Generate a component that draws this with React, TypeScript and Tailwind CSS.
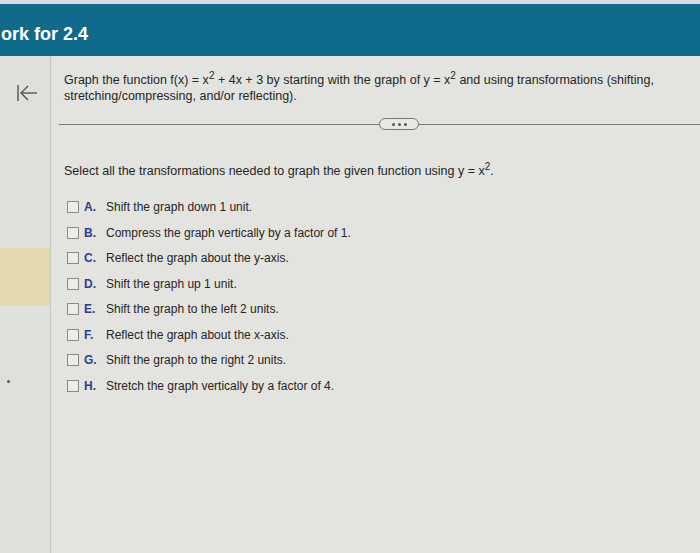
import React from "react";

const options = [
  ["A.", "Shift the graph down 1 unit."],
  ["B.", "Compress the graph vertically by a factor of 1."],
  ["C.", "Reflect the graph about the y-axis."],
  ["D.", "Shift the graph up 1 unit."],
  ["E.", "Shift the graph to the left 2 units."],
  ["F.", "Reflect the graph about the x-axis."],
  ["G.", "Shift the graph to the right 2 units."],
  ["H.", "Stretch the graph vertically by a factor of 4."],
];

export default function App() {
  return (
    <div
      className="w-[700px] h-[553px] overflow-hidden bg-[#e3e3df] flex flex-col text-[#262626]"
      style={{ fontFamily: '"Liberation Sans", Arial, sans-serif' }}
    >
      <div className="h-[4px] bg-[#d9dcdc]" />
      <div className="h-[52px] bg-[#106a8c] flex items-center pt-[8px]">
        <span className="text-white font-bold text-[18px] pl-[1px]">ork for 2.4</span>
      </div>
      <div className="flex flex-1">
        <div className="w-[51px] border-r border-[#c9c9c5] bg-[#dfdfdb] flex flex-col">
          <div className="h-[46px] flex items-end justify-center pl-[4px]">
            <svg width="22" height="18" viewBox="0 0 22 18" fill="none" stroke="#555" strokeWidth="1.4">
              <line x1="2" y1="1" x2="2" y2="17" />
              <line x1="5" y1="9" x2="21" y2="9" />
              <polyline points="12,2 5,9 12,16" />
            </svg>
          </div>
          <div className="h-[146px]" />
          <div className="h-[58px] bg-[#e2d9ae]" />
          <div className="h-[74px]" />
          <div className="ml-[7px] w-[3px] h-[3px] rounded-full bg-[#555]" />
        </div>
        <div className="flex-1 flex flex-col">
          <div className="pl-[13px] pt-[16px] pr-2 text-[12.5px] leading-[16px]">
            <p>
              Graph the function f(x) = x<sup className="text-[10px]">2</sup> + 4x + 3 by starting with the graph of y = x
              <sup className="text-[10px]">2</sup> and using transformations (shifting,
            </p>
            <p>stretching/compressing, and/or reflecting).</p>
          </div>
          <div className="mt-[14px] ml-[8px] flex items-center">
            <div className="w-[320px] h-px bg-[#7a7a78]" />
            <div className="w-[40px] h-[12px] rounded-full border border-[#777] bg-[#e8e8e4] flex items-center justify-center gap-[3px]">
              <span className="w-[3px] h-[3px] rounded-full bg-[#555]" />
              <span className="w-[3px] h-[3px] rounded-full bg-[#555]" />
              <span className="w-[3px] h-[3px] rounded-full bg-[#555]" />
            </div>
            <div className="flex-1 h-px bg-[#7a7a78]" />
          </div>
          <p className="pl-[13px] mt-[32px] text-[12.5px]">
            Select all the transformations needed to graph the given function using y = x
            <sup className="text-[10px]">2</sup>.
          </p>
          <div className="mt-[18px] pl-[16px] flex flex-col gap-[9px]">
            {options.map(([l, t]) => (
              <div key={l} className="flex items-center h-[16.5px] text-[12px]">
                <span className="w-[12px] h-[12px] border border-[#8a8a8a] bg-[#ececea]" />
                <span className="ml-[5px] w-[22px] font-bold text-[#2f3d8f]">{l}</span>
                <span>{t}</span>
              </div>
            ))}
          </div>
        </div>
      </div>
    </div>
  );
}
